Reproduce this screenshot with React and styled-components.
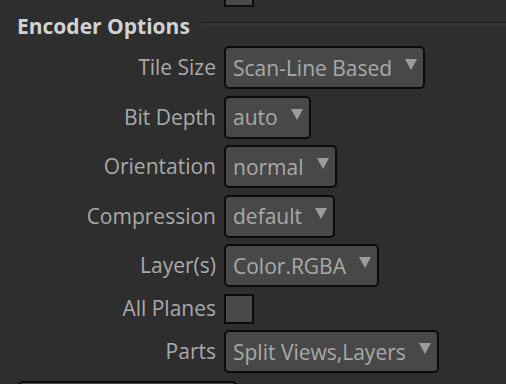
import React from "react";
import styled, { createGlobalStyle } from "styled-components";

const Global = createGlobalStyle`
  html, body {
    margin: 0;
    padding: 0;
    background: #2e2e2e;
    overflow: hidden;
  }
  body {
    font-family: "Open Sans", "Noto Sans", sans-serif;
  }
`;

const Page = styled.div`
  width: 506px;
  height: 384px;
  overflow: hidden;
  display: flex;
  flex-direction: column;
`;

const Form = styled.div`
  display: grid;
  grid-template-columns: 216px 1fr;
  column-gap: 8px;
  row-gap: 6.5px;
  align-items: center;
`;

const Label = styled.div`
  text-align: right;
  color: #a9a9a9;
  font-size: 21px;
  line-height: 1;
  white-space: nowrap;
`;

const Checkbox = styled.div`
  width: 30px;
  height: 30px;
  box-sizing: border-box;
  border: 2px solid #0c0c0c;
  background: #494949;
`;

const Field = styled.div`
  display: flex;
  align-items: center;
`;

const Select = styled.div`
  display: inline-flex;
  align-items: center;
  gap: 13px;
  height: 43px;
  box-sizing: border-box;
  padding: 0 6px 0 7px;
  border: 2px solid #0a0a0a;
  border-radius: 5px;
  background: #484848;
  color: #a9a9a9;
  font-size: 21px;
  white-space: nowrap;
`;

const Arrow = styled.svg`
  width: 12px;
  height: 11px;
  margin-top: -6px;
  flex: none;
`;

const Header = styled.div`
  display: flex;
  align-items: flex-start;
  margin: 6px 0 7px 17px;
`;

const Title = styled.div`
  color: #d2d2d2;
  font-weight: 700;
  font-size: 21px;
  line-height: 26px;
  white-space: nowrap;
`;

const Rule = styled.div`
  flex: 1;
  margin: 9px 0 0 12px;
  height: 3px;
  border-top: 1px solid #1c1c1c;
  background: #353535;
`;

const TopRow = styled(Form)`
  margin-top: -23px;
`;

const Bottom = styled.div`
  margin: 8px 0 0 18px;
  width: 219px;
  height: 30px;
  box-sizing: border-box;
  border: 2px solid #0a0a0a;
  border-radius: 5px;
  background: #484848;
  flex: none;
`;

const DropArrow = () => (
  <Arrow viewBox="0 0 12 11">
    <polygon points="0,0 12,0 6,11" fill="#9c9c9c" />
  </Arrow>
);

const Dropdown = ({ value }) => (
  <Field>
    <Select>
      {value}
      <DropArrow />
    </Select>
  </Field>
);

const rows = [
  { label: "Tile Size", value: "Scan-Line Based" },
  { label: "Bit Depth", value: "auto" },
  { label: "Orientation", value: "normal" },
  { label: "Compression", value: "default" },
  { label: "Layer(s)", value: "Color.RGBA" },
  { label: "All Planes", check: true },
  { label: "Parts", value: "Split Views,Layers" },
];

export default function App() {
  return (
    <Page>
      <Global />
      <TopRow>
        <Label>Read back file</Label>
        <Field>
          <Checkbox />
        </Field>
      </TopRow>
      <Header>
        <Title>Encoder Options</Title>
        <Rule />
      </Header>
      <Form>
        {rows.map((r) => (
          <React.Fragment key={r.label}>
            <Label>{r.label}</Label>
            {r.check ? (
              <Field>
                <Checkbox />
              </Field>
            ) : (
              <Dropdown value={r.value} />
            )}
          </React.Fragment>
        ))}
      </Form>
      <Bottom />
    </Page>
  );
}
